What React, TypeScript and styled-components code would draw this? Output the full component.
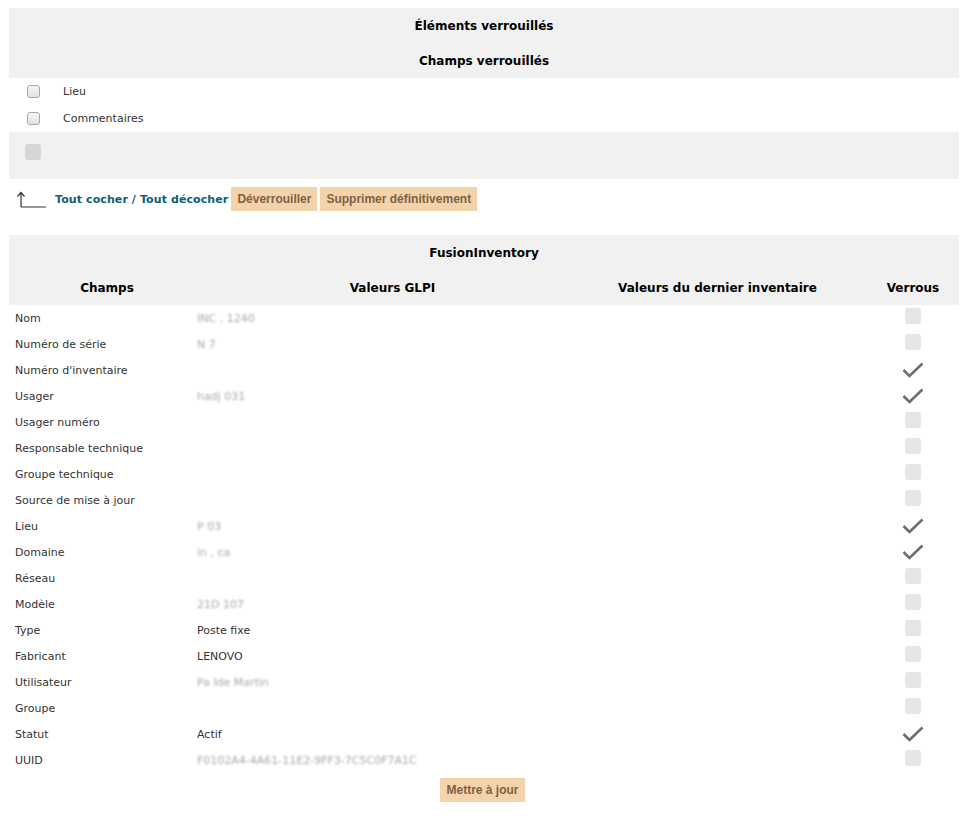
import React from "react";
import styled, { createGlobalStyle } from "styled-components";

const GlobalStyle = createGlobalStyle`
  html, body { margin: 0; padding: 0; background: #fff; }
  body { font-family: "DejaVu Sans", Verdana, sans-serif; font-size: 11px; color: #333; }
`;

const Page = styled.div`
  width: 950px;
  padding: 8px 6px 0 9px;
`;

const Table = styled.section<{ $mt?: number }>`
  width: 100%;
  margin-top: ${(p) => p.$mt ?? 0}px;
`;

const HeadBlock = styled.div`
  background: #f1f1f1;
`;

const HeadLine = styled.div`
  height: 35px;
  display: flex;
  align-items: center;
  justify-content: center;
  font-weight: bold;
  font-size: 12px;
  color: #000;
`;

const LockRow = styled.div`
  display: grid;
  grid-template-columns: 48px 1fr;
  align-items: center;
  height: 27px;
`;

const Cell = styled.div<{ $center?: boolean }>`
  padding: 0 6px;
  display: flex;
  align-items: center;
  justify-content: ${(p) => (p.$center ? "center" : "flex-start")};
`;

const NativeBox = styled.input.attrs({ type: "checkbox" })`
  appearance: none;
  -webkit-appearance: none;
  width: 13px;
  height: 13px;
  margin: 0;
  border: 1px solid #a9a9a9;
  border-radius: 3px;
  background: linear-gradient(#f6f6f6, #e2e2e2);
`;

const FooterRow = styled.div`
  background: #f1f1f1;
  height: 47px;
  box-sizing: border-box;
  padding-top: 12px;
  display: grid;
  grid-template-columns: 48px 1fr;
  align-items: start;
`;

const DisabledBox = styled.span<{ $dark?: boolean }>`
  display: inline-block;
  width: 16px;
  height: 16px;
  border-radius: 3px;
  background: ${(p) => (p.$dark ? "#d6d6d6" : "#e6e6e6")};
`;

const Actions = styled.div`
  display: flex;
  align-items: center;
  height: 24px;
  margin-top: 8px;
  padding-left: 8px;
`;

const ArrowIcon = styled.svg`
  width: 30px;
  height: 17px;
  margin-right: 8px;
`;

const Links = styled.span`
  font-weight: bold;
  font-size: 11px;
  letter-spacing: 0.1px;
  color: #0e5f74;
  margin-right: 3px;
`;

const Link = styled.a`
  color: #0e5f74;
  text-decoration: none;
`;

const Button = styled.button`
  font-family: "Liberation Sans", Arial, sans-serif;
  font-weight: bold;
  font-size: 12px;
  height: 24px;
  padding: 0 6px;
  border: none;
  background: #f4d3aa;
  color: #7c6244;
  margin-right: 3px;
  cursor: pointer;
`;

const ColHeads = styled.div`
  display: grid;
  grid-template-columns: 196px 375px 275px 104px;
  height: 35px;
  align-items: center;
  font-weight: bold;
  font-size: 12px;
  color: #000;
`;

const ColHead = styled.div<{ $shift?: number }>`
  text-align: center;
  padding-left: ${(p) => p.$shift ?? 0}px;
`;

const DataRow = styled.div`
  display: grid;
  grid-template-columns: 182px 402px 273px 93px;
  height: 26px;
  align-items: center;
`;

const LockCell = styled.div<{ $box?: boolean }>`
  height: 26px;
  display: flex;
  justify-content: center;
  align-items: ${(p) => (p.$box ? "flex-start" : "center")};
  padding-top: ${(p) => (p.$box ? "3px" : "0")};
  box-sizing: border-box;
`;

const Redacted = styled.span`
  color: #a8a8a8;
  filter: blur(0.9px);
`;

const Bottom = styled.div`
  display: flex;
  justify-content: center;
  margin-top: 5px;
`;

const Check = () => (
  <svg width="22" height="16" viewBox="0 0 22 16">
    <path d="M1.5 8 L7.5 14 L20.5 1.5" fill="none" stroke="#6e6e6e" strokeWidth="2.6" />
  </svg>
);

type Row = { label: string; value?: string; hidden?: boolean; locked: boolean };

const rows: Row[] = [
  { label: "Nom", value: "INC  , 1240", hidden: true, locked: false },
  { label: "Numéro de série", value: "N    7", hidden: true, locked: false },
  { label: "Numéro d'inventaire", locked: true },
  { label: "Usager", value: "hadj  031", hidden: true, locked: true },
  { label: "Usager numéro", locked: false },
  { label: "Responsable technique", locked: false },
  { label: "Groupe technique", locked: false },
  { label: "Source de mise à jour", locked: false },
  { label: "Lieu", value: "P 03", hidden: true, locked: true },
  { label: "Domaine", value: "in ,   ca", hidden: true, locked: true },
  { label: "Réseau", locked: false },
  { label: "Modèle", value: "21D 107", hidden: true, locked: false },
  { label: "Type", value: "Poste fixe", locked: false },
  { label: "Fabricant", value: "LENOVO", locked: false },
  { label: "Utilisateur", value: "Pa lde Martin", hidden: true, locked: false },
  { label: "Groupe", locked: false },
  { label: "Statut", value: "Actif", locked: true },
  { label: "UUID", value: "F0102A4-4A61-11E2-9FF3-7C5C0F7A1C", hidden: true, locked: false },
];

export default function App() {
  return (
    <>
      <GlobalStyle />
      <Page>
        <Table>
          <HeadBlock>
            <HeadLine>Éléments verrouillés</HeadLine>
            <HeadLine>Champs verrouillés</HeadLine>
          </HeadBlock>
          <LockRow>
            <Cell $center>
              <NativeBox />
            </Cell>
            <Cell>Lieu</Cell>
          </LockRow>
          <LockRow>
            <Cell $center>
              <NativeBox />
            </Cell>
            <Cell>Commentaires</Cell>
          </LockRow>
          <FooterRow>
            <Cell $center>
              <DisabledBox $dark />
            </Cell>
            <Cell />
          </FooterRow>
        </Table>

        <Actions>
          <ArrowIcon viewBox="0 0 30 17">
            <path d="M4 16 V2 M0.5 5.5 L4 1.5 L7.5 5.5 M4 16 H29" fill="none" stroke="#333" strokeWidth="1.2" />
          </ArrowIcon>
          <Links>
            <Link href="#">Tout cocher</Link> / <Link href="#">Tout décocher</Link>
          </Links>
          <Button>Déverrouiller</Button>
          <Button>Supprimer définitivement</Button>
        </Actions>

        <Table $mt={24}>
          <HeadBlock>
            <HeadLine>FusionInventory</HeadLine>
            <ColHeads>
              <ColHead>Champs</ColHead>
              <ColHead>Valeurs GLPI</ColHead>
              <ColHead>Valeurs du dernier inventaire</ColHead>
              <ColHead $shift={12}>Verrous</ColHead>
            </ColHeads>
          </HeadBlock>
          {rows.map((r) => (
            <DataRow key={r.label}>
              <Cell>{r.label}</Cell>
              <Cell>{r.value ? r.hidden ? <Redacted>{r.value}</Redacted> : r.value : null}</Cell>
              <Cell />
              <LockCell $box={!r.locked}>{r.locked ? <Check /> : <DisabledBox />}</LockCell>
            </DataRow>
          ))}
        </Table>
        <Bottom>
          <Button>Mettre à jour</Button>
        </Bottom>
      </Page>
    </>
  );
}
